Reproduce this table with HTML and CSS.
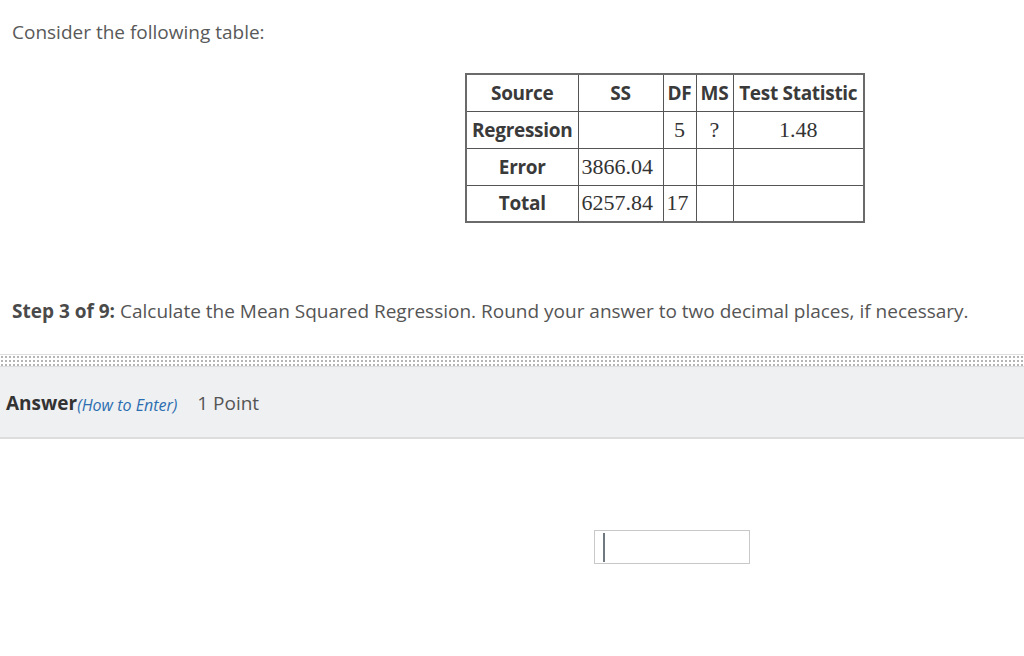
FILE: index.html
```html
<!DOCTYPE html>
<html>
<head>
<meta charset="utf-8">
<link rel="stylesheet" href="styles.css">
</head>
<body>
<div class="page">
  <p class="intro">Consider the following table:</p>
  <div class="table-wrap">
    <table class="anova">
      <tr>
        <th class="c-src">Source</th>
        <th class="c-ss">SS</th>
        <th class="c-df">DF</th>
        <th class="c-ms">MS</th>
        <th class="c-ts">Test Statistic</th>
      </tr>
      <tr>
        <th>Regression</th>
        <td></td>
        <td class="num-c">5</td>
        <td class="num-c">?</td>
        <td class="num-c">1.48</td>
      </tr>
      <tr>
        <th>Error</th>
        <td class="num">3866.04</td>
        <td></td>
        <td></td>
        <td></td>
      </tr>
      <tr>
        <th>Total</th>
        <td class="num">6257.84</td>
        <td class="num">17</td>
        <td></td>
        <td></td>
      </tr>
    </table>
  </div>
  <p class="step"><strong>Step 3 of 9:</strong> Calculate the Mean Squared Regression. Round your answer to two decimal places, if necessary.</p>
  <div class="divider"></div>
  <div class="answer-bar">
    <span class="answer-label">Answer</span><a class="how">(How to Enter)</a>
    <span class="points">1 Point</span>
  </div>
  <div class="input-row">
    <div class="input-box"><span class="caret"></span></div>
  </div>
</div>
</body>
</html>
```
FILE: styles.css
```css
html, body {
  margin: 0;
  padding: 0;
  background: #fff;
}
.page {
  font-family: "Open Sans", "Liberation Sans", sans-serif;
  color: #555;
  width: 1024px;
}
.intro {
  margin: 0;
  padding: 19px 0 0 12px;
  font-size: 19px;
  line-height: 26px;
  color: #595959;
}
.table-wrap {
  display: flex;
  padding: 28px 0 0 465px;
}
.anova {
  border-collapse: collapse;
  border: 2px solid #6a6a6a;
}
.anova th, .anova td {
  border: 1px solid #555;
  height: 37px;
  padding: 0 1px;
  box-sizing: border-box;
  white-space: nowrap;
}
.anova th {
  font-family: "Open Sans", sans-serif;
  font-weight: 700;
  font-size: 19px;
  color: #3a3a3a;
  text-align: center;
  letter-spacing: -0.3px;
}
.anova td {
  font-family: "Liberation Serif", serif;
  font-size: 22px;
  color: #333;
}
.anova .num { text-align: left; padding-left: 3px; }
.anova .num-c { text-align: center; }
.c-src { width: 112px; }
.c-ss { width: 85px; }
.c-df { width: 33px; }
.c-ms { width: 37px; }
.c-ts { width: 131px; }
.step {
  margin: 0;
  padding: 75px 0 0 12px;
  font-size: 19px;
  line-height: 26px;
  color: #555;
}
.step strong { color: #4a4a4a; }
.divider {
  margin-top: 30px;
  height: 11px;
  border-top: 1px solid #dedede;
  border-bottom: 1px solid #dedede;
  background-color: #fff;
  background-image: radial-gradient(circle, #b5b5b5 0.9px, transparent 1.1px);
  background-size: 4px 4px;
  background-position: 0 0;
}
.answer-bar {
  background: #eff0f2;
  height: 72px;
  border-bottom: 2px solid #dddddd;
  display: flex;
  align-items: center;
  padding-left: 6px;
  padding-top: 2px;
  box-sizing: border-box;
}
.answer-label {
  font-weight: 700;
  font-size: 19px;
  color: #333;
}
.how {
  font-style: italic;
  font-size: 16px;
  color: #2a6db0;
  margin-top: 3px;
}
.points {
  font-size: 19px;
  color: #555;
  margin-left: 20px;
}
.input-row {
  padding: 91px 0 0 594px;
}
.input-box {
  width: 156px;
  height: 34px;
  box-sizing: border-box;
  border: 1px solid #c8c8c8;
  display: flex;
  align-items: center;
  padding-left: 8px;
}
.caret {
  width: 2px;
  height: 29px;
  background: #707880;
}
```
